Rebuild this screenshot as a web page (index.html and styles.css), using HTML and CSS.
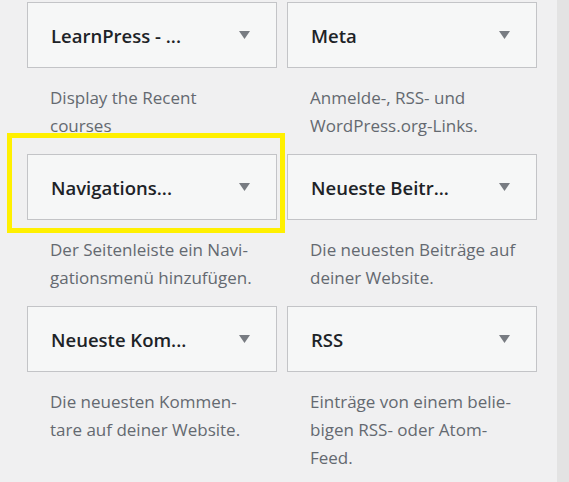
FILE: index.html
```html
<!DOCTYPE html>
<html lang="de">
<head>
<meta charset="utf-8">
<title>Widgets</title>
<link rel="stylesheet" href="styles.css">
</head>
<body>
<div class="page">
  <main class="panel">
    <div class="grid">
      <div class="widget">
        <div class="card"><span class="title">LearnPress - ...</span><svg class="arrow" viewBox="0 0 11 8" width="11" height="8"><path d="M0 0H11L5.5 8Z"/></svg></div>
        <p class="desc">Display the Recent<br>courses</p>
      </div>
      <div class="widget">
        <div class="card"><span class="title">Meta</span><svg class="arrow" viewBox="0 0 11 8" width="11" height="8"><path d="M0 0H11L5.5 8Z"/></svg></div>
        <p class="desc">Anmelde-, RSS- und<br>WordPress.org-Links.</p>
      </div>
      <div class="widget">
        <div class="card"><span class="title">Navigations...</span><svg class="arrow" viewBox="0 0 11 8" width="11" height="8"><path d="M0 0H11L5.5 8Z"/></svg></div>
        <p class="desc">Der Seitenleiste ein Navi-<br>gationsmenü hinzufügen.</p>
      </div>
      <div class="widget">
        <div class="card"><span class="title">Neueste Beitr...</span><svg class="arrow" viewBox="0 0 11 8" width="11" height="8"><path d="M0 0H11L5.5 8Z"/></svg></div>
        <p class="desc">Die neuesten Beiträge auf<br>deiner Website.</p>
      </div>
      <div class="widget">
        <div class="card"><span class="title">Neueste Kom...</span><svg class="arrow" viewBox="0 0 11 8" width="11" height="8"><path d="M0 0H11L5.5 8Z"/></svg></div>
        <p class="desc">Die neuesten Kommen-<br>tare auf deiner Website.</p>
      </div>
      <div class="widget">
        <div class="card"><span class="title">RSS</span><svg class="arrow" viewBox="0 0 11 8" width="11" height="8"><path d="M0 0H11L5.5 8Z"/></svg></div>
        <p class="desc">Einträge von einem belie-<br>bigen RSS- oder Atom-<br>Feed.</p>
      </div>
    </div>
    <div class="highlight"></div>
  </main>
  <div class="scrollbar"></div>
</div>
</body>
</html>
```
FILE: styles.css
```css
html, body {
  margin: 0;
  padding: 0;
  height: 100%;
  overflow: hidden;
}
body {
  background: #f0f0f1;
  font-family: "Open Sans", "Noto Sans", sans-serif;
}
.page {
  display: flex;
  height: 482px;
}
.panel {
  position: relative;
  width: 557px;
  flex: none;
}
.scrollbar {
  flex: 1;
  background: #e3e3e3;
}
.grid {
  display: grid;
  grid-template-columns: 250px 250px;
  column-gap: 10px;
  row-gap: 14px;
  padding: 2px 0 0 27px;
}
.card {
  box-sizing: border-box;
  height: 66px;
  background: #f6f7f7;
  border: 1px solid #c3c4c7;
  display: flex;
  align-items: center;
  justify-content: space-between;
  padding: 0 26px 0 23px;
}
.title {
  font-size: 18.5px;
  font-weight: 600;
  color: #1d2327;
  white-space: nowrap;
}
.arrow {
  fill: #787c82;
  flex: none;
}
.desc {
  margin: 16px 0 0 23px;
  font-size: 17px;
  line-height: 28px;
  color: #646970;
  min-height: 56px;
  white-space: nowrap;
}
.highlight {
  position: absolute;
  left: 7px;
  top: 133px;
  width: 278px;
  height: 100px;
  box-sizing: border-box;
  border: 5px solid #fff000;
}
```
